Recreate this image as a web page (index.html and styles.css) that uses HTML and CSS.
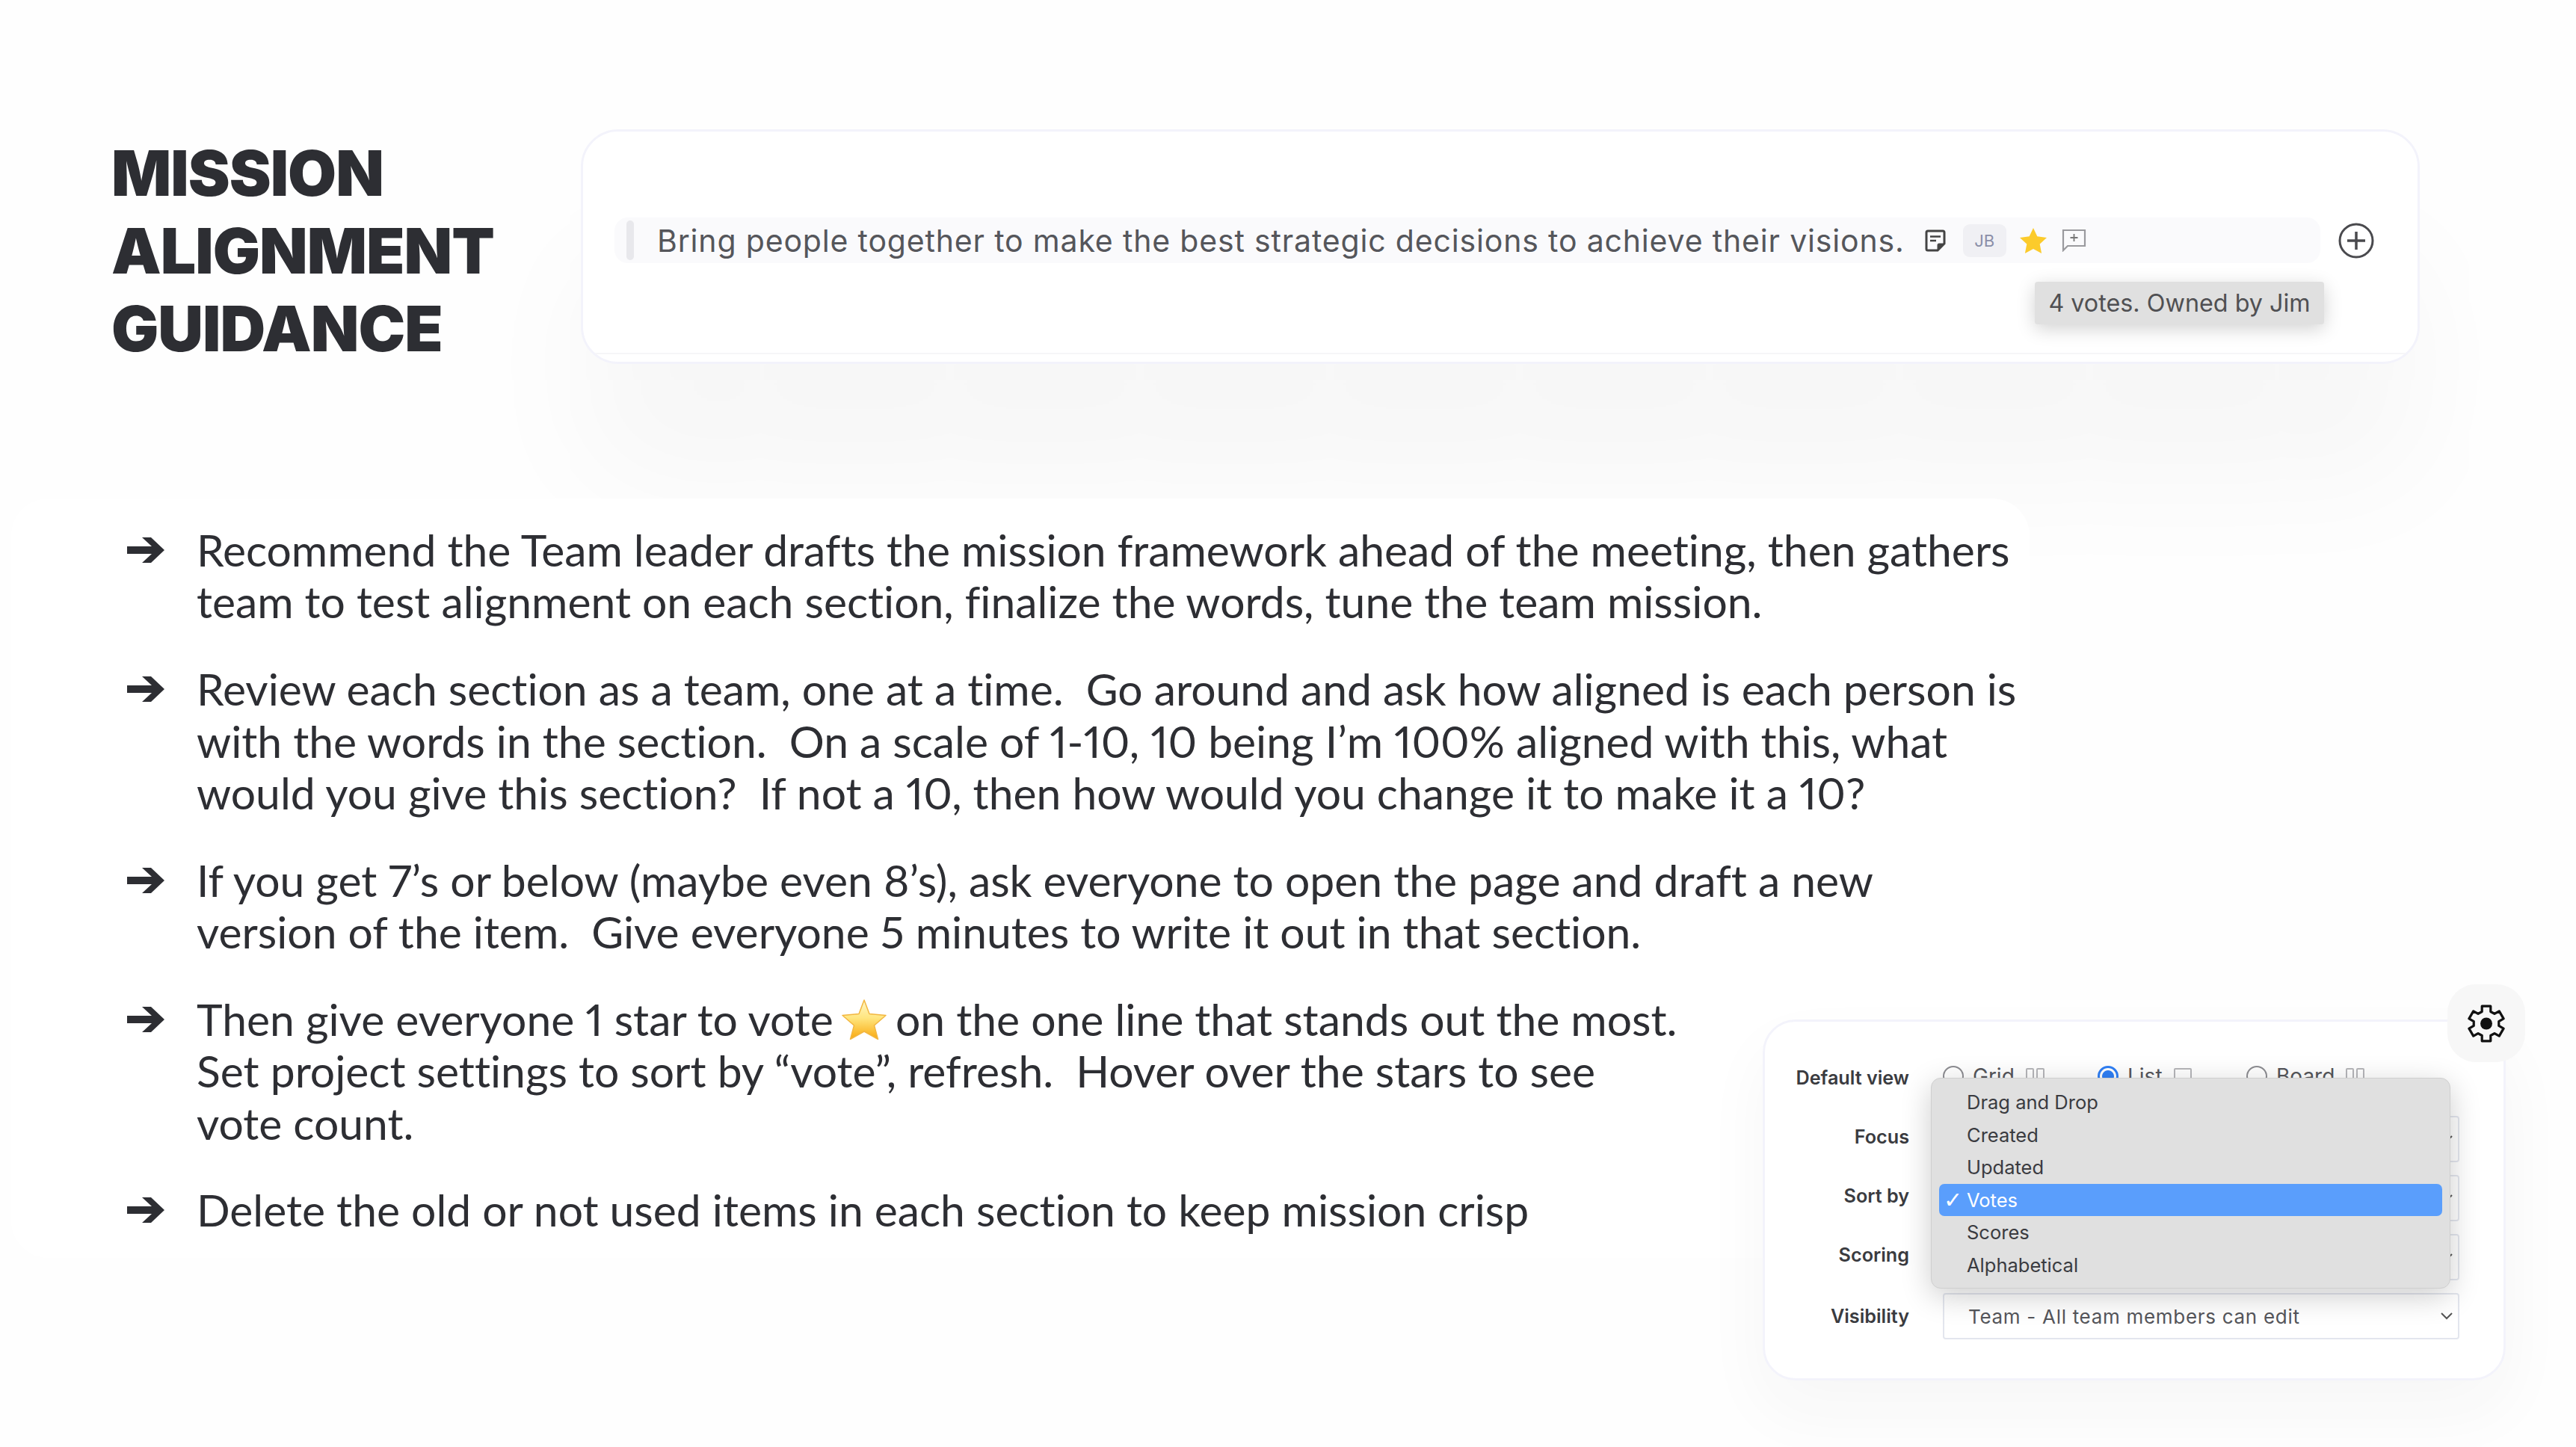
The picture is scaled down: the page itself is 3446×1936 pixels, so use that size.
FILE: index.html
```html
<!DOCTYPE html>
<html lang="en">
  <head>
    <meta charset="UTF-8" />
    <title>Mission Alignment Guidance</title>
    <link rel="stylesheet" href="styles.css">
  </head>
  <body>
    <div class="top">
      <h1>MISSION<br>ALIGNMENT<br>GUIDANCE</h1>

      <div class="mission_card">
        <div class="mission_row">
          <div class="row_bar">
            <span class="handle"></span>
            <span class="mission_text">Bring people together to make the best strategic decisions to achieve their visions.</span>
            <svg class="note_icon" viewBox="0 0 30 30" fill="none" stroke="#444" stroke-width="3">
              <path d="M5 2h20a2 2 0 0 1 2 2V19l-9 9H5a2 2 0 0 1-2-2V4a2 2 0 0 1 2-2z" />
              <path d="M8 9.500h14M8 15h8" stroke-width="2.500" />
              <path d="M18 27v-6.500a1.500 1.500 0 0 1 1.500-1.500H27z" fill="#444" stroke-width="1" />
            </svg>
            <span class="initials">JB</span>
            <svg class="star_icon" viewBox="0 0 36 34">
              <path d="M18 0l5.300 11.300 12.700 1.600-9.300 8.600 2.400 12.500L18 27.900 6.900 34l2.400-12.500L0 12.900l12.700-1.600z" fill="#fccb2b" />
            </svg>
            <svg class="comment_icon" viewBox="0 0 33 31" fill="none" stroke="#9a9a9e" stroke-width="2.200">
              <path d="M2 2h29v21H8l-6 6z" />
              <path d="M16.500 7v10M11.500 12h10" stroke="#777" stroke-width="1.800" />
            </svg>
          </div>
          <svg class="add_icon" viewBox="0 0 48 48" fill="none" stroke="#4a4a4e">
            <circle cx="24" cy="24" r="22" stroke-width="3" />
            <path d="M24 12v24M12 24h24" stroke-width="3.500" />
          </svg>
        </div>
        <div class="vote_tip">4 votes. Owned by Jim</div>
      </div>
    </div>

    <div class="panel">
      <ul class="guidance">
        <li>
          <svg class="arrow" viewBox="0 0 50 34"><path d="M0 12h33L20 0h12l18 17-18 17H20l13-12H0z" /></svg>
          <p>Recommend the Team leader drafts the mission framework ahead of the meeting, then gathers<br>team to test alignment on each section, finalize the words, tune the team mission.</p>
        </li>
        <li>
          <svg class="arrow" viewBox="0 0 50 34"><path d="M0 12h33L20 0h12l18 17-18 17H20l13-12H0z" /></svg>
          <p>Review each section as a team, one at a time.  Go around and ask how aligned is each person is<br>with the words in the section.  On a scale of 1-10, 10 being I’m 100% aligned with this, what<br>would you give this section?  If not a 10, then how would you change it to make it a 10?</p>
        </li>
        <li>
          <svg class="arrow" viewBox="0 0 50 34"><path d="M0 12h33L20 0h12l18 17-18 17H20l13-12H0z" /></svg>
          <p>If you get 7’s or below (maybe even 8’s), ask everyone to open the page and draft a new<br>version of the item.  Give everyone 5 minutes to write it out in that section.</p>
        </li>
        <li>
          <svg class="arrow" viewBox="0 0 50 34"><path d="M0 12h33L20 0h12l18 17-18 17H20l13-12H0z" /></svg>
          <p>Then give everyone 1 star to vote <svg class="emoji_star" viewBox="0 0 60 54">
              <defs>
                <linearGradient id="star_fill" x1="0" y1="0" x2="0" y2="1">
                  <stop offset="0" stop-color="#fff6c8" />
                  <stop offset="0.45" stop-color="#ffe680" />
                  <stop offset="1" stop-color="#f9a90e" />
                </linearGradient>
              </defs>
              <path d="M30 1l7 18.500 22 2-15.500 13.500 5 18.500L30 43 11.500 53.500l5-18.500L1 21.500l22-2z" fill="url(#star_fill)" stroke="#f2b640" stroke-width="1.500" stroke-linejoin="round" />
            </svg> on the one line that stands out the most.<br>Set project settings to sort by “vote”, refresh.  Hover over the stars to see<br>vote count.</p>
        </li>
        <li>
          <svg class="arrow" viewBox="0 0 50 34"><path d="M0 12h33L20 0h12l18 17-18 17H20l13-12H0z" /></svg>
          <p>Delete the old or not used items in each section to keep mission crisp</p>
        </li>
      </ul>

      <div class="settings_card">
        <div class="gear_tile">
          <svg viewBox="-25 -25.500 50 51">
            <polygon fill="none" stroke="#111" stroke-width="3.200" stroke-linejoin="round" points="-5.800,-16 -5.800,-23.300 5.800,-23.300 5.800,-16 10.960,-13.020 17.280,-16.670 23.080,-6.630 16.760,-2.980 16.760,2.980 23.080,6.630 17.280,16.670 10.960,13.020 5.800,16 5.800,23.300 -5.800,23.300 -5.800,16 -10.960,13.020 -17.280,16.670 -23.080,6.630 -16.760,2.980 -16.760,-2.980 -23.080,-6.630 -17.280,-16.670 -10.960,-13.020" />
            <circle r="8" fill="#111" />
          </svg>
        </div>

        <div class="setting_row radio_row">
          <label class="setting_label">Default view</label>
          <div class="view_options">
            <span class="view_option"><i class="radio"></i>Grid<i class="view_glyph double"><b></b><b></b></i></span>
            <span class="view_option narrow"><i class="radio checked"></i>List<i class="view_glyph"><b></b></i></span>
            <span class="view_option"><i class="radio"></i>Board<i class="view_glyph double"><b></b><b></b></i></span>
          </div>
        </div>
        <div class="setting_row">
          <label class="setting_label raised">Focus</label>
          <div class="select_box">&nbsp;<svg class="chevron" viewBox="0 0 16 10"><path d="M1 1l7 7 7-7" /></svg></div>
        </div>
        <div class="setting_row">
          <label class="setting_label raised">Sort by</label>
          <div class="select_box">&nbsp;<svg class="chevron" viewBox="0 0 16 10"><path d="M1 1l7 7 7-7" /></svg></div>
        </div>
        <div class="setting_row">
          <label class="setting_label raised">Scoring</label>
          <div class="select_box">&nbsp;<svg class="chevron" viewBox="0 0 16 10"><path d="M1 1l7 7 7-7" /></svg></div>
        </div>
        <div class="setting_row">
          <label class="setting_label">Visibility</label>
          <div class="select_box">Team - All team members can edit<svg class="chevron" viewBox="0 0 16 10"><path d="M1 1l7 7 7-7" /></svg></div>
        </div>

        <div class="sort_menu">
          <div class="sort_item">Drag and Drop</div>
          <div class="sort_item">Created</div>
          <div class="sort_item">Updated</div>
          <div class="sort_item selected"><span class="tick">✓</span>Votes</div>
          <div class="sort_item">Scores</div>
          <div class="sort_item">Alphabetical</div>
        </div>
      </div>
    </div>
  </body>
</html>
```

FILE: styles.css
```css
* {
  margin: 0;
  padding: 0;
  box-sizing: border-box;
}

html,
body {
  width: 3446px;
  height: 1936px;
  overflow: hidden;
}

body {
  background-color: #fefefe;
  color: #2d2e33;
  font-family: "Lato", sans-serif;
}

.top {
  display: flex;
  align-items: flex-start;
  padding: 173px 0 0 149px;
  height: 667px;
}

h1 {
  width: 628px;
  margin-top: 7px;
  font-family: "Inter", sans-serif;
  font-size: 84px;
  font-weight: 900;
  line-height: 104px;
  letter-spacing: -1px;
  color: #2d2e33;
}

.mission_card {
  width: 2460px;
  height: 314px;
  position: relative;
  padding-top: 115px;
  padding-left: 42px;
  background-color: #fff;
  border: 3px solid #f3f3fb;
  border-radius: 50px;
  box-shadow: 0 160px 170px rgba(0, 0, 0, 0.03);

  &::after {
    content: "";
    position: absolute;
    left: 16px;
    right: 16px;
    bottom: 10px;
    height: 2px;
    background-color: #f6f6f8;
  }
}

.mission_row {
  display: flex;
  align-items: center;
  gap: 24px;
}

.row_bar {
  width: 2282px;
  height: 61px;
  display: flex;
  align-items: center;
  padding-left: 16px;
  background-color: #fafafc;
  border-radius: 18px;
}

.handle {
  width: 10px;
  height: 53px;
  margin-right: 31px;
  background-color: #e8e8ec;
  border-radius: 5px;
}

.mission_text {
  font-family: "Inter", sans-serif;
  font-size: 41px;
  letter-spacing: 0.830px;
  color: #55565b;
  white-space: nowrap;
}

.note_icon {
  width: 30px;
  height: 30px;
  margin-left: 26px;
}

.initials {
  width: 58px;
  height: 44px;
  margin-left: 22px;
  display: flex;
  justify-content: center;
  align-items: center;
  font-family: "Inter", sans-serif;
  font-size: 22px;
  color: #8a8ea8;
  background-color: #f0f0f4;
  border-radius: 9px;
}

.star_icon {
  width: 36px;
  height: 34px;
  margin-left: 18px;
}

.comment_icon {
  width: 33px;
  height: 31px;
  margin-left: 20px;
}

.add_icon {
  width: 48px;
  height: 48px;
}

.vote_tip {
  position: absolute;
  top: 201px;
  left: 1942px;
  width: 387px;
  height: 57px;
  display: flex;
  justify-content: center;
  align-items: center;
  font-family: "Inter", sans-serif;
  font-size: 32.300px;
  color: #505053;
  background-color: #e0e0e0;
  border-radius: 4px;
  box-shadow: 0 6px 24px rgba(0, 0, 0, 0.18);
}

.panel {
  width: 2700px;
  height: 1016px;
  display: grid;
  grid-template-columns: 2361px 994px;
  position: relative;
  background-color: #fff;
  border-radius: 50px;
  margin-left: 15px;
  box-shadow: 0 0 30px rgba(0, 0, 0, 0.008);
}

.guidance {
  grid-column: 1 / 3;
  grid-row: 1;
  list-style: none;
  display: flex;
  flex-direction: column;
  gap: 47.300px;
  padding: 34px 0 0 155px;
}

.guidance li {
  display: flex;
  align-items: flex-start;
  gap: 43px;
}

.guidance p {
  font-size: 58.800px;
  line-height: 69.400px;
  font-variant-ligatures: none;
  font-variant-numeric: proportional-nums;
  white-space: pre-wrap;
  color: #2d2e33;
}

.arrow {
  width: 50px;
  height: 34px;
  margin-top: 18px;
  flex-shrink: 0;
  fill: #2d2e33;
}

.emoji_star {
  width: 60px;
  height: 54px;
  margin-left: -4px;
  margin-right: -3px;
  vertical-align: -5px;
}

.settings_card {
  grid-column: 2;
  grid-row: 1;
  align-self: start;
  width: 994px;
  height: 483px;
  margin-left: -18px;
  margin-top: 697px;
  position: relative;
  padding-top: 44px;
  padding-right: 55px;
  background-color: #fff;
  border: 3px solid #f3f3fb;
  border-radius: 44px;
  box-shadow: 0 40px 90px rgba(40, 40, 60, 0.04);
}

.gear_tile {
  position: absolute;
  top: -50px;
  right: -29px;
  width: 104px;
  height: 104px;
  display: flex;
  justify-content: center;
  align-items: center;
  background-color: #f7f7f7;
  border-radius: 38px;
}

.gear_tile svg {
  width: 50px;
  height: 51px;
}

.setting_row {
  display: flex;
  align-items: center;
  height: 62px;
  margin-bottom: 17px;
}

.radio_row {
  margin-bottom: 20px;
}

.setting_label {
  width: 193px;
  text-align: right;
  margin-right: 45px;
  font-family: "Inter", sans-serif;
  font-size: 25.200px;
  font-weight: 600;
  color: #3a3b40;
}

.setting_label.raised {
  margin-bottom: 6px;
}

.view_options {
  display: flex;
  margin-top: -4px;
  font-family: "Inter", sans-serif;
  font-size: 28px;
  color: #55565b;
}

.view_option {
  width: 207px;
  display: flex;
  align-items: center;
  gap: 12px;
}

.view_option.narrow {
  width: 199px;
}

.radio {
  width: 28px;
  height: 28px;
  border: 2px solid #8d8d92;
  border-radius: 50%;
}

.radio.checked {
  border: 3px solid #2f7ff5;
  background: radial-gradient(circle, #2f7ff5 48%, #fff 54%);
}

.view_glyph {
  display: flex;
  gap: 3px;
  margin-left: 3px;

  b {
    width: 24px;
    height: 22px;
    border: 2px solid #b6b6ba;
    border-radius: 2px;
  }
}

.view_glyph.double b {
  width: 11px;
}

.select_box {
  width: 691px;
  height: 62px;
  display: flex;
  align-items: center;
  justify-content: space-between;
  padding: 0 7px 0 32px;
  font-family: "Inter", sans-serif;
  font-size: 26px;
  letter-spacing: 0.700px;
  color: #55565b;
  background-color: #fff;
  border: 2px solid #e3e6ee;
  border-radius: 4px;
}

.chevron {
  width: 16px;
  height: 10px;
  fill: none;
  stroke: #555;
  stroke-width: 2;
}

.sort_menu {
  position: absolute;
  top: 75px;
  left: 222px;
  width: 695px;
  height: 282px;
  padding: 10px 10px;
  background-color: #e0e0e0;
  border: 1px solid #cfcfcf;
  border-radius: 13px;
  box-shadow: 0 10px 40px rgba(0, 0, 0, 0.2);
  font-family: "Inter", sans-serif;
  font-size: 25.500px;
  color: #3a3b40;
}

.sort_item {
  height: 43.500px;
  display: flex;
  align-items: center;
  padding-left: 37px;
  position: relative;
  border-radius: 7px;
}

.sort_item.selected {
  background-color: #5a9efc;
  color: #fff;
}

.tick {
  position: absolute;
  left: 6px;
  font-family: "DejaVu Sans", sans-serif;
  font-size: 30px;
}
```
